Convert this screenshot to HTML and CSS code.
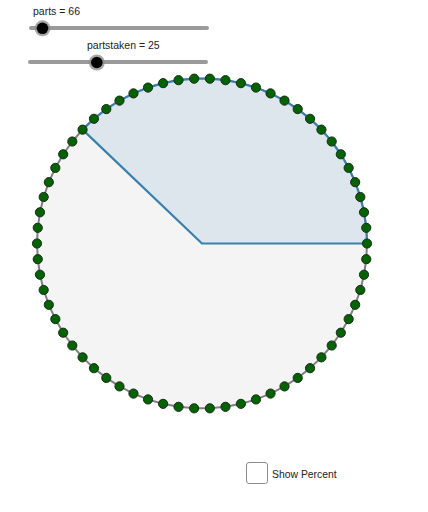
FILE: index.html
```html
<!DOCTYPE html>
<html>
<head>
<meta charset="utf-8">
<link rel="stylesheet" href="styles.css">
</head>
<body>
<div class="applet">
  <svg class="board" width="428" height="450" viewBox="0 0 428 450" xmlns="http://www.w3.org/2000/svg">
    <g class="slider">
      <text class="label" x="33" y="15">parts = 66</text>
      <line class="track" x1="31" y1="28" x2="207" y2="28"/>
      <circle class="halo" cx="42.5" cy="28.3" r="8"/>
      <circle class="knob" cx="42.5" cy="28.3" r="5.8"/>
    </g>
    <g class="slider">
      <text class="label" x="87" y="48.5">partstaken = 25</text>
      <line class="track" x1="30" y1="62" x2="206" y2="62"/>
      <circle class="halo" cx="96.8" cy="62.5" r="8"/>
      <circle class="knob" cx="96.8" cy="62.5" r="5.8"/>
    </g>
    <polygon id="whole" class="whole" points=""/>
    <polygon id="sector" class="sector" points=""/>
    <g id="dots"></g>
  </svg>
  <div class="controls">
    <label class="check">
      <span class="box"></span>
      <span class="check-text">Show Percent</span>
    </label>
  </div>
</div>
<script src="script.js"></script>
</body>
</html>
```

FILE: styles.css
```css
html, body {
  margin: 0;
  padding: 0;
  background: #ffffff;
}
.applet {
  width: 428px;
  height: 512px;
  display: flex;
  flex-direction: column;
  font-family: "Liberation Sans", Arial, sans-serif;
}
.board {
  display: block;
}
.label {
  font-family: "Liberation Sans", Arial, sans-serif;
  font-size: 10.5px;
  fill: #222222;
}
.track {
  stroke: #9a9a9a;
  stroke-width: 4;
  stroke-linecap: round;
}
.halo {
  fill: #8a8a8a;
  opacity: 0.75;
}
.knob {
  fill: #000000;
}
.whole {
  fill: #f4f4f4;
  stroke: #808080;
  stroke-width: 2;
  stroke-linejoin: round;
}
.sector {
  fill: #dde6ed;
  stroke: #3a80ab;
  stroke-width: 2.2;
  stroke-linejoin: round;
}
.dot {
  fill: #006300;
  stroke: #1e2a1e;
  stroke-width: 1;
}
.controls {
  display: flex;
  padding: 12px 0 0 246px;
}
.check {
  display: flex;
  align-items: center;
  gap: 4px;
}
.box {
  width: 20px;
  height: 20px;
  border: 1.5px solid #8c8c8c;
  border-radius: 3px;
  background: #ffffff;
}
.check-text {
  font-size: 10.4px;
  color: #222222;
  position: relative;
  top: 1px;
}
```

FILE: script.js
```js
(function () {
  var cx = 202, cy = 243.5, r = 165, n = 66, k = 25;
  var pts = [];
  for (var i = 0; i < n; i++) {
    var a = i * 2 * Math.PI / n;
    pts.push([cx + r * Math.cos(a), cy - r * Math.sin(a)]);
  }
  function fmt(p) { return p[0].toFixed(2) + "," + p[1].toFixed(2); }
  document.getElementById("whole").setAttribute("points", pts.map(fmt).join(" "));
  var sec = [[cx, cy]].concat(pts.slice(0, k + 1));
  document.getElementById("sector").setAttribute("points", sec.map(fmt).join(" "));
  var g = document.getElementById("dots");
  var ns = "http://www.w3.org/2000/svg";
  pts.forEach(function (p) {
    var c = document.createElementNS(ns, "circle");
    c.setAttribute("cx", p[0].toFixed(2));
    c.setAttribute("cy", p[1].toFixed(2));
    c.setAttribute("r", "4.6");
    c.setAttribute("class", "dot");
    g.appendChild(c);
  });
})();
```
